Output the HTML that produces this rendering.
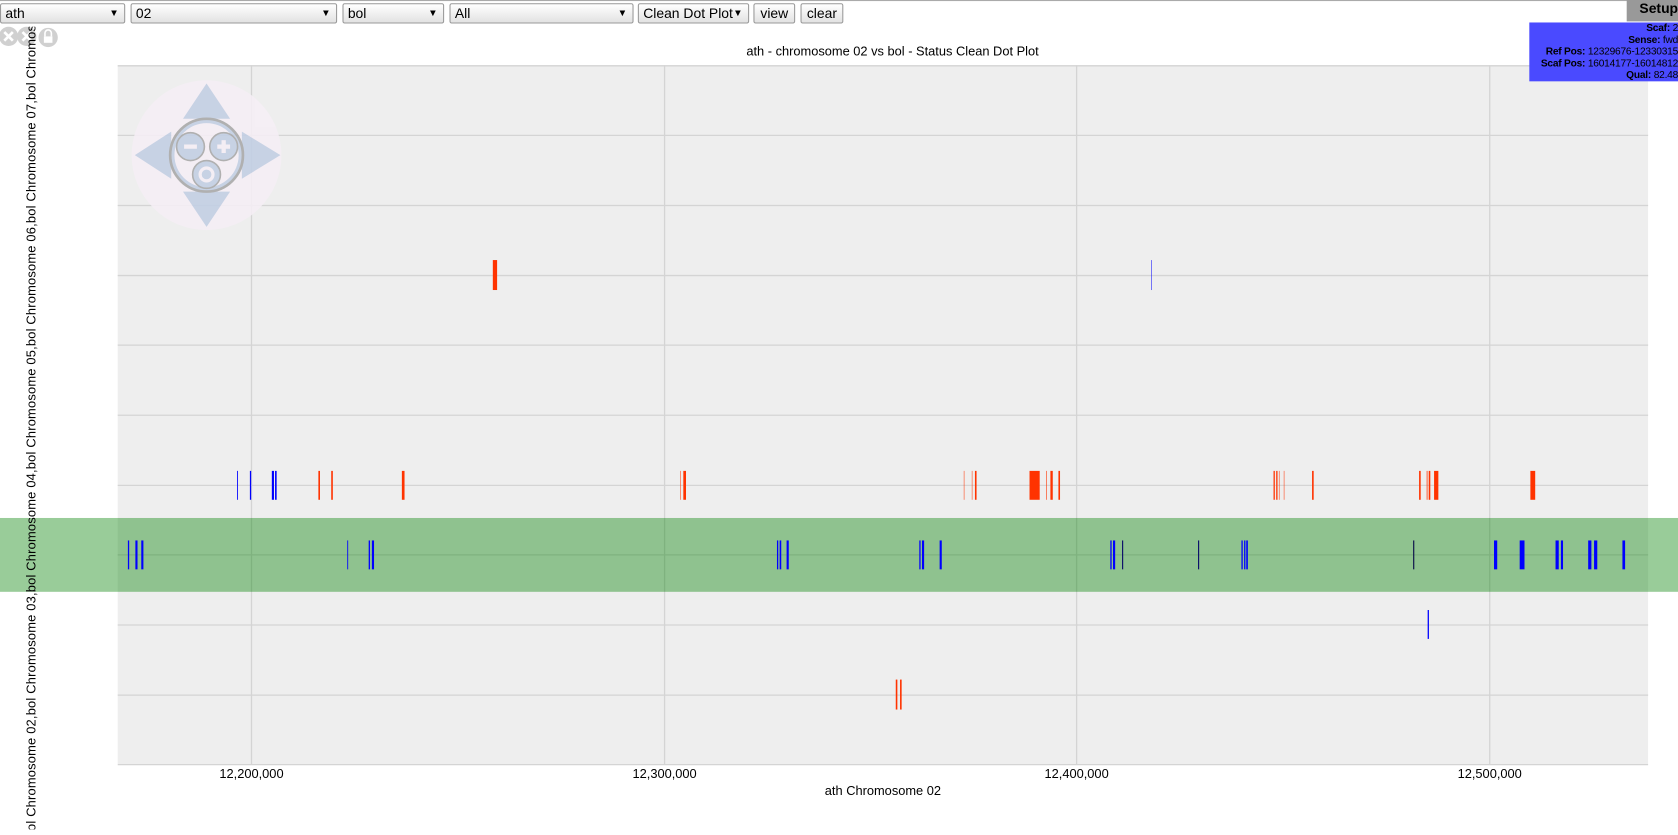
<!DOCTYPE html>
<html><head><meta charset="utf-8">
<style>
html,body{margin:0;padding:0;background:#fff;overflow:hidden;width:1678px;height:834px;}
#w{position:absolute;left:0;top:0;width:1568px;height:780px;transform:scale(1.0702);transform-origin:0 0;font-family:"Liberation Sans",sans-serif;}
.sel{position:absolute;top:3px;border:1px solid #999;border-radius:2px;background:linear-gradient(#fff,#e2e2e2);font-size:13px;line-height:17px;padding-left:4px;box-sizing:border-box;height:19px;color:#000;}
.sel span{position:absolute;right:5px;top:0;font-size:9px;}
.btn{position:absolute;top:3px;height:19px;border:1px solid #999;border-radius:2px;background:linear-gradient(#fff,#e2e2e2);font-size:13px;line-height:17px;text-align:center;box-sizing:border-box;}
#lt{position:absolute;left:19px;top:25px;width:20px;height:750px;overflow:hidden;}
#lt div{position:absolute;bottom:-8px;left:0;writing-mode:vertical-rl;transform:rotate(180deg);font-size:12px;white-space:nowrap;letter-spacing:0.2px;line-height:20px;}
#info{position:absolute;left:1429px;top:21px;width:139px;height:55px;background:#4a4aff;font-size:9.5px;line-height:11px;text-align:right;color:#000;white-space:nowrap;overflow:hidden;letter-spacing:-0.2px;}
#setup{position:absolute;left:1520px;top:0;width:48px;height:20px;background:#999;font-weight:bold;font-size:13px;text-align:right;line-height:16px;}
</style></head><body><div id="w">
<div style="position:absolute;left:0;top:0;width:1568px;height:1px;background:#aaa"></div>
<div class="sel" style="left:0;width:117px">ath<span>▼</span></div>
<div class="sel" style="left:122px;width:193px">02<span>▼</span></div>
<div class="sel" style="left:320px;width:95px">bol<span>▼</span></div>
<div class="sel" style="left:420px;width:172px">All<span>▼</span></div>
<div class="sel" style="left:596px;width:104px">Clean Dot Plot<span>▼</span></div>
<div class="btn" style="left:704px;width:39px">view</div>
<div class="btn" style="left:748px;width:40px">clear</div>

<svg style="position:absolute;left:0;top:0" width="1568" height="780">
<rect x="110" y="61" width="1430" height="653" fill="#eeeeee"/>
<g stroke="#d4d4d4" stroke-width="1.2">
<line x1="110" y1="61.5" x2="1540" y2="61.5"/><line x1="110" y1="126.5" x2="1540" y2="126.5"/><line x1="110" y1="192" x2="1540" y2="192"/><line x1="110" y1="257.5" x2="1540" y2="257.5"/><line x1="110" y1="322.5" x2="1540" y2="322.5"/><line x1="110" y1="388" x2="1540" y2="388"/><line x1="110" y1="453.5" x2="1540" y2="453.5"/><line x1="110" y1="518.5" x2="1540" y2="518.5"/><line x1="110" y1="584" x2="1540" y2="584"/><line x1="110" y1="649.5" x2="1540" y2="649.5"/><line x1="110" y1="714.5" x2="1540" y2="714.5"/>
<line x1="235" y1="61" x2="235" y2="714"/><line x1="621" y1="61" x2="621" y2="714"/><line x1="1006" y1="61" x2="1006" y2="714"/><line x1="1392" y1="61" x2="1392" y2="714"/>
</g>
<rect x="0" y="484" width="1568" height="69" fill="rgba(0,128,0,0.4)"/>
<g fill="#ff3300">
<rect x="460.5" y="243" width="4" height="28"/>
<rect x="297.5" y="440" width="1.5" height="27"/><rect x="309.5" y="440" width="1.5" height="27"/><rect x="375.5" y="440" width="2.5" height="27"/>
<rect x="635.5" y="440" width="0.8" height="27" opacity=".6"/><rect x="638.5" y="440" width="2.5" height="27"/>
<rect x="900.5" y="440" width="0.8" height="27" opacity=".6"/><rect x="908" y="440" width="0.8" height="27" opacity=".6"/><rect x="911" y="440" width="1.5" height="27"/>
<rect x="962" y="440" width="9.5" height="27"/><rect x="977.5" y="440" width="0.8" height="27" opacity=".7"/><rect x="981.5" y="440" width="2.2" height="27"/><rect x="989" y="440" width="1.5" height="27"/>
<rect x="1190" y="440" width="1.2" height="27"/><rect x="1192.5" y="440" width="1.2" height="27"/><rect x="1195" y="440" width="0.8" height="27" opacity=".6"/><rect x="1199.5" y="440" width="0.8" height="27" opacity=".6"/><rect x="1226" y="440" width="1.5" height="27"/>
<rect x="1326" y="440" width="1.5" height="27"/><rect x="1333" y="440" width="1" height="27" opacity=".7"/><rect x="1335" y="440" width="1.5" height="27"/><rect x="1340" y="440" width="4" height="27"/>
<rect x="1430" y="440" width="4.5" height="27"/>
<rect x="837" y="635" width="1.5" height="28"/><rect x="841" y="635" width="1.5" height="28"/>
</g>
<g fill="#0000ff">
<rect x="1075.5" y="243" width="0.8" height="28" opacity=".6"/>
<rect x="221.5" y="440" width="0.8" height="27"/><rect x="233.5" y="440" width="1.2" height="27"/><rect x="254" y="440" width="2" height="27"/><rect x="257" y="440" width="1.5" height="27"/>
<rect x="119.5" y="505" width="1.2" height="27"/><rect x="126.5" y="505" width="2" height="27"/><rect x="132" y="505" width="2" height="27"/><rect x="324.5" y="505" width="0.8" height="27"/><rect x="344.5" y="505" width="1.2" height="27"/><rect x="347.5" y="505" width="2" height="27"/>
<rect x="726" y="505" width="1.2" height="27"/><rect x="728.5" y="505" width="1.5" height="27"/><rect x="735" y="505" width="2" height="27"/>
<rect x="859" y="505" width="1.2" height="27"/><rect x="861.5" y="505" width="2" height="27"/><rect x="878" y="505" width="2" height="27"/>
<rect x="1037.5" y="505" width="1.2" height="27"/><rect x="1040" y="505" width="2" height="27"/><rect x="1048.5" y="505" width="1" height="27" fill="#000066"/><rect x="1119.5" y="505" width="1" height="27" fill="#000066"/>
<rect x="1160" y="505" width="1.2" height="27"/><rect x="1162.5" y="505" width="1.2" height="27"/><rect x="1164.5" y="505" width="1.5" height="27"/><rect x="1320.5" y="505" width="1" height="27" fill="#000044"/>
<rect x="1396" y="505" width="3" height="27"/><rect x="1420" y="505" width="4.5" height="27"/><rect x="1453.5" y="505" width="3" height="27"/><rect x="1458.5" y="505" width="2" height="27"/><rect x="1484" y="505" width="3" height="27"/><rect x="1489.5" y="505" width="3" height="27"/><rect x="1516" y="505" width="2.5" height="27"/>
<rect x="1334" y="570" width="1.2" height="27"/>
</g>
<g font-family="Liberation Sans,sans-serif" font-size="12" text-anchor="middle" fill="#000">
<text x="834" y="52">ath - chromosome 02 vs bol - Status Clean Dot Plot</text>
<text x="235" y="727">12,200,000</text><text x="621" y="727">12,300,000</text><text x="1006" y="727">12,400,000</text><text x="1392" y="727">12,500,000</text>
<text x="825" y="743">ath Chromosome 02</text>
</g>
<g opacity="0.9">
<circle cx="193" cy="145" r="70" fill="#f5eef5"/>
<g fill="#c3cfe4">
<polygon points="193,78 171,111 215,111"/><polygon points="193,212 171,179 215,179"/>
<polygon points="126,145 160,123 160,167"/><polygon points="262,145 226,123 226,167"/>
</g>
<circle cx="193" cy="145" r="34" fill="#c3cfe4" stroke="#aaa" stroke-width="2.5"/>
<circle cx="193" cy="145" r="30" fill="#f5eef5"/>
<circle cx="178" cy="137" r="13" fill="#c3cfe4" stroke="#aaa" stroke-width="1.5"/>
<circle cx="209" cy="137" r="13" fill="#c3cfe4" stroke="#aaa" stroke-width="1.5"/>
<circle cx="193" cy="163" r="13" fill="#c3cfe4" stroke="#aaa" stroke-width="1.5"/>
<rect x="172" y="135" width="12" height="4" fill="#f5eef5"/>
<rect x="203" y="135" width="12" height="4" fill="#f5eef5"/><rect x="207" y="131" width="4" height="12" fill="#f5eef5"/>
<circle cx="193" cy="163" r="6" fill="none" stroke="#f5eef5" stroke-width="3"/>
</g>
<g fill="#d0d0d0">
<circle cx="8" cy="34" r="9"/><circle cx="25" cy="34" r="9"/><circle cx="45" cy="35" r="9"/>
</g>
<g stroke="#fff" stroke-width="2.5"><line x1="4" y1="30" x2="12" y2="38"/><line x1="12" y1="30" x2="4" y2="38"/><line x1="21" y1="30" x2="29" y2="38"/><line x1="29" y1="30" x2="21" y2="38"/></g>
<rect x="41" y="34" width="8" height="6" fill="#fff"/><path d="M42 34 v-3 a3 3 0 0 1 6 0 v3" fill="none" stroke="#fff" stroke-width="1.5"/>
</svg>
<div id="lt"><div>bol Chromosome 02,bol Chromosome 03,bol Chromosome 04,bol Chromosome 05,bol Chromosome 06,bol Chromosome 07,bol Chromosome 08</div></div>
<div id="setup">Setup</div>
<div id="info"><b>Scaf:</b> 2<br><b>Sense:</b> fwd<br><b>Ref Pos:</b> 12329676-12330315<br><b>Scaf Pos:</b> 16014177-16014812<br><b>Qual:</b> 82.48</div>
</div></body></html>
